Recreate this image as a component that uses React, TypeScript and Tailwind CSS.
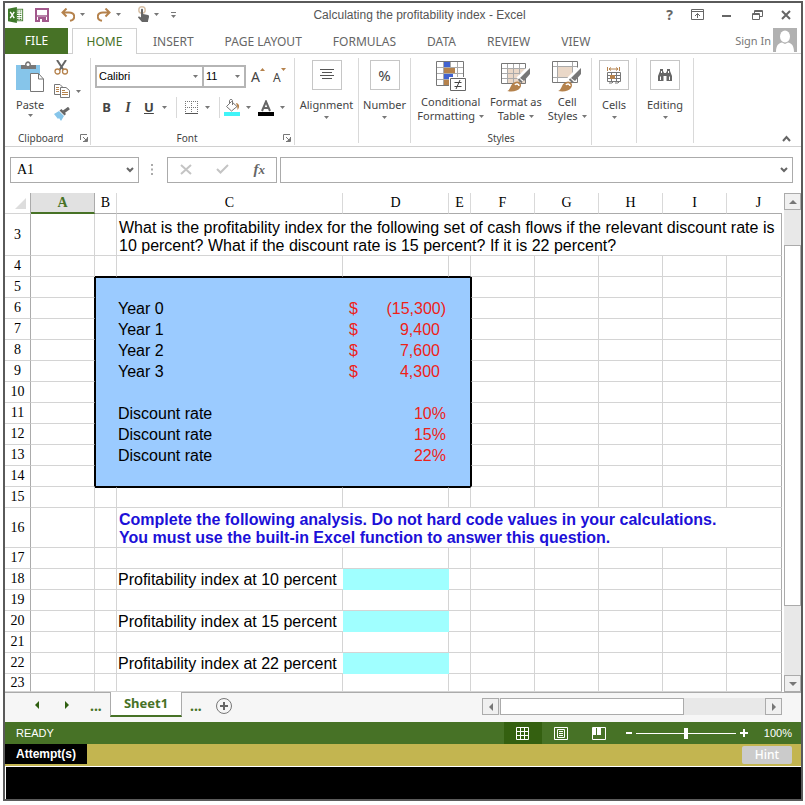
import React, { ReactNode } from "react";

const LABELS = "font-['Noto_Sans',sans-serif]";
const ARIAL = "font-['Liberation_Sans',Arial,sans-serif]";
const SERIF = "font-['Liberation_Serif','Times_New_Roman',serif]";

function Caret({ className = "" }: { className?: string }) {
  return (
    <svg className={"shrink-0 " + className} width="5" height="3" viewBox="0 0 5 3" aria-hidden="true">
      <path d="M0 0H5L2.500 3Z" fill="#777" />
    </svg>
  );
}

/* ---------- Quick access icons ---------- */

function ExcelLogo() {
  return (
    <svg width="16" height="16" viewBox="0 0 18 18" aria-hidden="true">
      <rect x="8.5" y="2.5" width="8" height="13" fill="#fff" stroke="#3f7a2b" />
      <path d="M10 4.500h2M13 4.500h2M10 7h2M13 7h2M10 9.500h2M13 9.500h2M10 12h2M13 12h2M10 14h2M13 14h2" stroke="#3f7a2b" strokeWidth="1.2" />
      <path d="M0 2L10 0V18L0 16Z" fill="#3f7a2b" />
      <path d="M2.500 5.500L7 12.500M7 5.500L2.500 12.500" stroke="#fff" strokeWidth="1.6" />
    </svg>
  );
}

function SaveIcon() {
  return (
    <svg width="14" height="14" viewBox="0 0 14 14" aria-hidden="true">
      <path d="M1 1H13V13H1Z" fill="#fff" stroke="#a2588c" strokeWidth="2" />
      <path d="M2 8H12" stroke="#a2588c" strokeWidth="1.5" />
      <path d="M3 9H11V14H3Z" fill="#a2588c" />
      <path d="M5 11H7V14H5Z" fill="#fff" />
    </svg>
  );
}

function UndoIcon({ flip = false }: { flip?: boolean }) {
  return (
    <svg width="14" height="14" viewBox="0 0 14 14" aria-hidden="true" className={flip ? "-scale-x-100" : ""}>
      <path d="M5.500 .5L1.500 4.500L5.500 8.500M1.500 4.500H8C14.500 4.500 15 11.500 9 12.800" fill="none" stroke="#b5824c" strokeWidth="2" />
    </svg>
  );
}

function TouchIcon() {
  return (
    <svg width="13" height="17" viewBox="0 0 13 17" aria-hidden="true">
      <circle cx="5" cy="4" r="3.2" fill="none" stroke="#d9c3aa" strokeWidth="1.5" />
      <path d="M4 3.500C4 2.500 6 2.500 6 3.500V8L11 9C12 9.300 12 10 12 11L11 15V16H5L1 11.500C1 10 2.500 10 4 11.500Z" fill="#666" />
    </svg>
  );
}

/* ---------- Ribbon icons ---------- */

function PasteIcon() {
  return (
    <svg width="28" height="31" viewBox="0 0 28 31" aria-hidden="true">
      <rect x="0" y="4" width="24" height="25" fill="#86c5ea" />
      <path d="M5 8V4H9C9 -1 15 -1 15 4H20V8Z" fill="#777" />
      <circle cx="12" cy="3.5" r="1.5" fill="#fff" />
      <path d="M14.500 12.500H22.500L27.500 18V30.500H14.500Z" fill="#fff" stroke="#777" />
      <path d="M22.500 12.500V18H27.500" fill="none" stroke="#777" />
    </svg>
  );
}

function CutIcon() {
  return (
    <svg width="15" height="15" viewBox="0 0 15 15" aria-hidden="true">
      <path d="M3 0L9.500 10M12 0L5.500 10" stroke="#666" strokeWidth="2" />
      <circle cx="3.5" cy="11.5" r="2.5" fill="#fff" stroke="#b5824c" strokeWidth="1.3" />
      <circle cx="11" cy="11.5" r="2.5" fill="#fff" stroke="#b5824c" strokeWidth="1.3" />
    </svg>
  );
}

function CopyIcon() {
  return (
    <svg width="16" height="14" viewBox="0 0 16 14" aria-hidden="true">
      <path d="M.5 .5H6L8.500 3V10.500H.5Z" fill="#fff" stroke="#777" />
      <path d="M2 3.500H5M2 5.500H5M2 7.500H5" stroke="#b5824c" />
      <path d="M6.500 3.500H12L15.500 6.500V13.500H6.500Z" fill="#fff" stroke="#777" />
      <path d="M8 6.500H11M8 8.500H14M8 10.500H14" stroke="#b5824c" />
    </svg>
  );
}

function PainterIcon() {
  return (
    <svg width="16" height="14" viewBox="0 0 16 14" aria-hidden="true">
      <path d="M0 7L5 4L10 9L7 14L5 11L4 12Z" fill="#86c5ea" />
      <path d="M5.500 3.500L7.500 2L12 7L10.500 8.500Z" fill="#666" />
      <path d="M9.500 5L15 1" stroke="#666" strokeWidth="3" />
    </svg>
  );
}

function LauncherIcon() {
  return (
    <svg width="8" height="8" viewBox="0 0 8 8" aria-hidden="true">
      <path d="M.5 6V.5H7M3 3L6 6M7.500 3V7.500H3" fill="none" stroke="#777" />
      <path d="M7 4V7H4Z" fill="#777" />
    </svg>
  );
}

function BordersIcon() {
  return (
    <svg width="14" height="14" viewBox="0 0 14 14" aria-hidden="true">
      <path d="M.5 0V12M6.500 0V12M12.500 0V12M0 .5H13M0 6.500H13" stroke="#777" strokeDasharray="1 1" />
      <path d="M0 12.500H13" stroke="#555" />
    </svg>
  );
}

function FillIcon() {
  return (
    <svg width="16" height="17" viewBox="0 0 16 17" aria-hidden="true">
      <path d="M7.500 2.500L13 7.500L7.500 12L2.500 7.500Z" fill="#fff" stroke="#777" />
      <path d="M5.500 5V1.500C6 0 8 0 8.500 1.500V6" fill="none" stroke="#777" />
      <path d="M12 4C15.500 4.500 16 8 13.500 11C13.500 8 13 6.500 12 4Z" fill="#b5824c" />
      <rect y="13" width="16" height="4" fill="#40f4f8" />
    </svg>
  );
}

function FontColorIcon() {
  return (
    <svg width="16" height="16" viewBox="0 0 16 16" aria-hidden="true">
      <path d="M4 11L8 1.500L12 11M5.500 8H10.500" fill="none" stroke="#666" strokeWidth="2" />
      <rect y="12" width="16" height="4" fill="#000" />
    </svg>
  );
}

function ConditionalIcon() {
  return (
    <svg width="30" height="30" viewBox="0 0 30 30" aria-hidden="true">
      <path d="M.5 .5H27.500V24.500H.5Z" fill="#fff" stroke="#777" />
      <path d="M7.500 1V24M14.500 1V24M21.500 1V24M1 6.500H27M1 12.500H27M1 18.500H27" stroke="#aaa" />
      <path d="M8 1H14V6H8ZM8 13H17V18H8Z" fill="#4263d0" />
      <path d="M8 7H19V12H8ZM8 19H13V24H8Z" fill="#b5824c" />
      <path d="M13 16H30V30H13Z" fill="#fff" />
      <path d="M14.500 17.500H29.500V29.500H14.500Z" fill="#fff" stroke="#666" />
      <path d="M18.500 21.500H25.500M18.500 25.500H25.500M24 19L20 28" stroke="#444" />
    </svg>
  );
}

function Brush() {
  return (
    <>
      <path d="M29 8L18 19" stroke="#fff" strokeWidth="7" />
      <path d="M29 7V13L23 20L19 17Z" fill="#777" />
      <path d="M17.500 18L21 21.500" stroke="#777" strokeWidth="2" />
      <path d="M6 30C10 29 9 23 14 21C18 19 22 23 19 27C17 30 12 31 6 30Z" fill="#b5824c" />
      <path d="M14 24C15 22 18 23 18 25" stroke="#fff" strokeWidth="1.5" fill="none" />
    </>
  );
}

function FormatTableIcon() {
  return (
    <svg width="30" height="31" viewBox="0 0 30 31" aria-hidden="true">
      <path d="M.5 2.500H24.500V22.500H.5Z" fill="#fff" stroke="#777" />
      <path d="M7 8H24V22H7Z" fill="#ead8c8" />
      <path d="M6.500 3V22M12.500 3V22M18.500 3V22M1 7.500H24M1 12.500H24M1 17.500H24" stroke="#aaa" />
      <Brush />
    </svg>
  );
}

function CellStylesIcon() {
  return (
    <svg width="30" height="31" viewBox="0 0 30 31" aria-hidden="true">
      <path d="M.5 .5H25.500V21.500H.5Z" fill="#fff" stroke="#777" />
      <path d="M5.500 1V21M20.500 1V21M1 5.500H25M1 16.500H25" stroke="#aaa" />
      <path d="M6 6H20V16H6Z" fill="#ead8c8" />
      <Brush />
    </svg>
  );
}

function AlignIcon() {
  return (
    <svg width="14" height="12" viewBox="0 0 14 12" aria-hidden="true">
      <path d="M0 .5H14M2 3.500H12M0 6.500H14M2 9.500H12" stroke="#555" />
    </svg>
  );
}

function CellsIcon() {
  return (
    <svg width="16" height="17" viewBox="0 0 16 17" aria-hidden="true">
      <path d="M1.500 0V4M13.500 0V4M3 2H12M5 .5L3 2L5 3.500M10 .5L12 2L10 3.500" fill="none" stroke="#b5824c" />
      <path d="M1.500 5.500H14.500V14.500H1.500ZM5.500 6V14M10.500 6V14M1 8.500H15M1 11.500H15" fill="none" stroke="#777" />
      <path d="M4 8H9V12H4Z" fill="#b5824c" />
      <path d="M3 16H6L7 15M9 16H12L13 15" fill="none" stroke="#777" />
    </svg>
  );
}

function BinocularsIcon() {
  return (
    <svg width="16" height="14" viewBox="0 0 16 14" aria-hidden="true">
      <path d="M3 1H6V3L7 5H9L10 3V1H13V3L15 8V13H9.500V8H6.500V13H1V8L3 3Z" fill="#666" />
      <path d="M3.500 8.500V12M12.500 8.500V12M4.500 3V5M11.500 3V5" stroke="#fff" />
    </svg>
  );
}

/* ---------- Ribbon pieces ---------- */

function BoxedGroup({ icon, label, width }: { icon: ReactNode; label: string; width: string }) {
  return (
    <div className={"mb-[3px] mt-1 flex shrink-0 flex-col items-center border-r border-[#d9d9d9] pt-[2px] " + width}>
      <button type="button" className="flex flex-col items-center">
        <span className="flex size-[30px] items-center justify-center border border-[#c6c6c6]">{icon}</span>
        <span className="mt-[6px] leading-[18px]">{label}</span>
        <Caret className="mt-[2px]" />
      </button>
    </div>
  );
}

function StyleButton({ icon, lines }: { icon: ReactNode; lines: [string, string] }) {
  return (
    <button type="button" className="flex flex-col items-center whitespace-nowrap leading-[14px]">
      <span className="flex h-[34px] items-start justify-center">{icon}</span>
      <span>{lines[0]}</span>
      <span className="flex items-center gap-1">
        {lines[1]}
        <Caret />
      </span>
    </button>
  );
}

function TitleBar() {
  return (
    <header className="flex h-[25px] items-center pb-[2px] pl-[3px] pr-[10px]">
      <div className="flex flex-1 items-center">
        <ExcelLogo />
        <button type="button" aria-label="Save" className="ml-[11px]"><SaveIcon /></button>
        <button type="button" aria-label="Undo" className="ml-3 flex items-center gap-[5px]"><UndoIcon /><Caret /></button>
        <button type="button" aria-label="Redo" className="ml-3 flex items-center gap-[5px]"><UndoIcon flip /><Caret /></button>
        <button type="button" aria-label="Touch mode" className="ml-4 flex items-center gap-1"><TouchIcon /><Caret /></button>
        <button type="button" aria-label="Customize toolbar" className="ml-3 flex flex-col items-center gap-[2px]">
          <span className="h-px w-[5px] bg-[#777]" />
          <Caret />
        </button>
      </div>
      <h1 className={"pl-10 text-[12px] text-[#555] " + ARIAL}>Calculating the profitability index - Excel</h1>
      <div className="flex flex-1 items-center justify-end text-[#666]">
        <button type="button" aria-label="Help" className="text-[14px] font-bold">?</button>
        <button type="button" aria-label="Ribbon display options" className="ml-[18px]">
          <svg width="13" height="11" viewBox="0 0 13 11"><path d="M.5 .5H12.500V10.500H.5ZM0 2.500H13M6.500 9V4.500M4 7L6.500 4.500L9 7" fill="none" stroke="#666" /></svg>
        </button>
        <button type="button" aria-label="Minimize" className="ml-[18px]">
          <svg width="10" height="10" viewBox="0 0 10 10"><path d="M0 6H9" stroke="#666" strokeWidth="2" /></svg>
        </button>
        <button type="button" aria-label="Restore" className="ml-5">
          <svg width="11" height="10" viewBox="0 0 11 10"><path d="M2.500 3V.5H10.500V6.500H8M.5 3.500H7.500V9.500H.5ZM0 4.500H8M2 1.500H11" fill="none" stroke="#666" /></svg>
        </button>
        <button type="button" aria-label="Close" className="ml-[18px]">
          <svg width="10" height="10" viewBox="0 0 10 10"><path d="M1 1L9 9M9 1L1 9" stroke="#666" strokeWidth="2" /></svg>
        </button>
      </div>
    </header>
  );
}

const TABS = ["INSERT", "PAGE LAYOUT", "FORMULAS", "DATA", "REVIEW", "VIEW"];

function TabBar() {
  return (
    <nav className="flex h-[26px] text-[12px] text-[#666]">
      <button type="button" className="w-[63px] bg-[#477226] text-white">FILE</button>
      <span className="w-1 border-b border-[#d0d0d0]" />
      <button type="button" className="w-[65px] border border-b-0 border-[#d0d0d0] text-[#477226]">HOME</button>
      <div className="flex flex-1 items-center gap-[31px] border-b border-[#d0d0d0] pl-4 pt-[2px]">
        {TABS.map((t) => (
          <button type="button" key={t} className="whitespace-nowrap">{t}</button>
        ))}
      </div>
      <div className="flex border-b border-[#d0d0d0] pr-[4px]">
        <a href="#signin" className="pt-1 pr-[2px] text-[11px] leading-[18px] text-[#777]">Sign In</a>
        <svg width="24" height="24" viewBox="0 0 24 24" aria-hidden="true">
          <path d="M0 0H24V24H0Z" fill="#b1b1b1" />
          <path d="M3 24C3 17 6 15 9 14.500L12 16L15 14.500C18 15 21 17 21 24Z" fill="#fff" />
          <ellipse cx="12" cy="8.5" rx="5" ry="6" fill="#fff" />
        </svg>
      </div>
    </nav>
  );
}

function Ribbon() {
  return (
    <section className="flex h-[93px] border-b border-[#d0d0d0] text-[11px] text-[#444]">
      <div className="mb-px mt-1 flex w-[86px] shrink-0 flex-col border-r border-[#d9d9d9]">
        <div className="flex flex-1 pl-[11px]">
          <button type="button" className="flex flex-col items-center pt-[3px]">
            <PasteIcon />
            <span className="mt-[5px] leading-[16px]">Paste</span>
            <Caret className="mt-px" />
          </button>
          <div className="flex flex-col items-start gap-[9px] pl-[10px] pt-[2px]">
            <button type="button" aria-label="Cut"><CutIcon /></button>
            <button type="button" aria-label="Copy" className="flex items-center gap-[6px]"><CopyIcon /><Caret /></button>
            <button type="button" aria-label="Format painter"><PainterIcon /></button>
          </div>
        </div>
        <div className="flex items-center justify-between pl-[13px] pr-[2px] text-[10px] leading-[14px]">
          Clipboard
          <button type="button" aria-label="Clipboard options"><LauncherIcon /></button>
        </div>
      </div>

      <div className="mb-px mt-1 flex w-[204px] shrink-0 flex-col border-r border-[#d9d9d9] pl-1">
        <div className="flex pt-[7px]">
          <label className={"flex h-[23px] w-[109px] items-center border-2 border-[#b5b5b5] pb-px pl-[2px] pr-1 text-black " + ARIAL}>
            <select aria-label="Font" className="w-full appearance-none text-[11px] outline-none"><option>Calibri</option></select>
            <Caret />
          </label>
          <label className={"-ml-[2px] flex h-[23px] w-[44px] items-center border-2 border-[#b5b5b5] pb-px pl-[2px] pr-1 text-black " + ARIAL}>
            <select aria-label="Font size" className="w-full appearance-none text-[11px] outline-none"><option>11</option></select>
            <Caret />
          </label>
          <button type="button" aria-label="Increase font size" className="ml-[5px] flex items-start pt-[3px]">
            <span className="text-[14px] leading-[18px]">A</span>
            <svg width="5" height="3" viewBox="0 0 5 3"><path d="M0 3H5L2.500 0Z" fill="#b5824c" /></svg>
          </button>
          <button type="button" aria-label="Decrease font size" className="ml-2 flex items-start pt-[3px]">
            <span className="text-[12px] leading-[20px]">A</span>
            <svg width="5" height="3" viewBox="0 0 5 3"><path d="M0 0H5L2.500 3Z" fill="#b5824c" /></svg>
          </button>
        </div>
        <div className="flex flex-1 items-center pb-1 pl-[7px]">
          <button type="button" className="w-[9px] text-[13px] font-bold">B</button>
          <button type="button" className={"ml-[13px] w-2 text-[14px] font-bold italic " + SERIF}>I</button>
          <button type="button" className="ml-[12px] flex items-center gap-2 text-[13px]"><span className="font-bold underline">U</span><Caret /></button>
          <span className="ml-[9px] h-[21px] w-px bg-[#d9d9d9]" />
          <button type="button" aria-label="Borders" className="ml-2 flex items-center gap-[6px]"><BordersIcon /><Caret /></button>
          <span className="ml-[9px] h-[21px] w-px bg-[#d9d9d9]" />
          <button type="button" aria-label="Fill color" className="ml-1 flex items-center gap-[6px]"><FillIcon /><Caret /></button>
          <button type="button" aria-label="Font color" className="ml-[7px] flex items-center gap-[6px]"><FontColorIcon /><Caret /></button>
        </div>
        <div className="flex items-center justify-between pr-[3px] text-[10px] leading-[14px]">
          <span className="w-2" />
          <span className="pr-3">Font</span>
          <button type="button" aria-label="Font options"><LauncherIcon /></button>
        </div>
      </div>

      <BoxedGroup width="w-[64px]" label="Alignment" icon={<AlignIcon />} />
      <BoxedGroup width="w-[52px]" label="Number" icon={<span className="text-[15px]">%</span>} />

      <div className="mb-px mt-1 flex w-[181px] shrink-0 flex-col items-center border-r border-[#d9d9d9] pt-[3px]">
        <div className="flex flex-1 gap-[6px] pl-[2px]">
          <StyleButton icon={<ConditionalIcon />} lines={["Conditional", "Formatting"]} />
          <StyleButton icon={<FormatTableIcon />} lines={["Format as", "Table"]} />
          <StyleButton icon={<CellStylesIcon />} lines={["Cell", "Styles"]} />
        </div>
        <span className="text-[10px] leading-[14px]">Styles</span>
      </div>

      <BoxedGroup width="w-[45px]" label="Cells" icon={<CellsIcon />} />
      <BoxedGroup width="w-[57px]" label="Editing" icon={<BinocularsIcon />} />
      <button type="button" aria-label="Collapse ribbon" className="mb-1 ml-auto mr-[10px] self-end">
        <svg width="9" height="7" viewBox="0 0 9 7"><path d="M1 6L4.500 2L8 6" fill="none" stroke="#666" strokeWidth="2" /></svg>
      </button>
    </section>
  );
}

function FormulaBar() {
  const chevron = (
    <svg width="8" height="6" viewBox="0 0 8 6" className="shrink-0" aria-hidden="true">
      <path d="M1 1L4 4L7 1" fill="none" stroke="#666" strokeWidth="2" />
    </svg>
  );
  return (
    <section className="flex h-[46px] items-start pl-[5px] pr-2 pt-[10px]">
      <label className="flex h-[26px] w-[129px] items-center border border-[#ababab] pl-[6px] pr-1">
        <input aria-label="Name box" defaultValue="A1" className={"w-full min-w-0 pb-[2px] text-[14px] outline-none " + SERIF} />
        {chevron}
      </label>
      <svg width="2" height="11" viewBox="0 0 2 11" className="ml-3 mt-[7px]" aria-hidden="true">
        <path d="M0 0H2V2H0ZM0 4.500H2V6.500H0ZM0 9H2V11H0Z" fill="#aaa" />
      </svg>
      <div className="ml-[14px] flex h-[26px] w-[110px] items-center justify-between border border-[#ababab] pb-[2px] pl-3 pr-[11px]">
        <button type="button" aria-label="Cancel">
          <svg width="12" height="11" viewBox="0 0 12 11"><path d="M1 1L11 10M11 1L1 10" stroke="#c4c4c4" strokeWidth="2" /></svg>
        </button>
        <button type="button" aria-label="Enter">
          <svg width="13" height="10" viewBox="0 0 13 10"><path d="M1 5L4.500 8.500L12 1" fill="none" stroke="#c4c4c4" strokeWidth="2" /></svg>
        </button>
        <button type="button" aria-label="Insert function" className={"text-[15px] font-bold italic leading-[16px] text-[#666] " + SERIF}>
          f<span className="text-[13px]">x</span>
        </button>
      </div>
      <label className="ml-[3px] flex h-[26px] flex-1 items-center border border-[#ababab] pl-1 pr-[4px]">
        <input aria-label="Formula" className="w-full min-w-0 outline-none" />
        {chevron}
      </label>
    </section>
  );
}

/* ---------- Sheet ---------- */

const GRID = "border-r border-b border-[#d4d4d4] p-0 ";
const PLAIN_COLUMNS = ["F", "G", "H", "I", "J"];

const INPUTS: Record<number, { label: string; value: string; money?: boolean; negative?: boolean }> = {
  6: { label: "Year 0", value: "(15,300)", money: true, negative: true },
  7: { label: "Year 1", value: "9,400", money: true },
  8: { label: "Year 2", value: "7,600", money: true },
  9: { label: "Year 3", value: "4,300", money: true },
  11: { label: "Discount rate", value: "10%" },
  12: { label: "Discount rate", value: "15%" },
  13: { label: "Discount rate", value: "22%" },
};

const ANSWERS: Record<number, string> = {
  18: "Profitability index at 10 percent",
  20: "Profitability index at 15 percent",
  22: "Profitability index at 22 percent",
};

function RowNumber({ n }: { n: number }) {
  return (
    <th scope="row" className={"border-r border-b border-b-[#d4d4d4] border-r-[#ababab] p-0 text-[14px] font-normal leading-[16px] " + SERIF}>
      {n}
    </th>
  );
}

function Plain({ boxed = false }: { boxed?: boolean }) {
  return (
    <>
      {PLAIN_COLUMNS.map((c) => (
        <td
          key={c}
          className={
            "border-r border-b border-b-[#d4d4d4] p-0 " +
            (c === "J" ? "border-r-[#ababab] " : "border-r-[#d4d4d4] ") +
            (boxed && c === "F" ? "border-l border-l-black" : "")
          }
        />
      ))}
    </>
  );
}

function BoxRow({ n }: { n: number }) {
  const item = INPUTS[n];
  const edge = n === 5 ? "border-t border-t-black " : n === 14 ? "border-b border-b-black " : "";
  const fill = "bg-[#9bcbff] p-0 " + edge;
  return (
    <tr className="h-[21px]">
      <RowNumber n={n} />
      <td className="border-r border-b border-b-[#d4d4d4] border-r-black p-0" />
      <td className={fill + "border-l border-l-black"} />
      <td className={fill + "pl-px"}>{item?.label}</td>
      <td className={fill + "text-[#ee2218]"}>
        {item && (
          <div className={"flex pl-[6px] " + (item.money && !item.negative ? "pr-[9px]" : "pr-[3px]")}>
            {item.money && <span>$</span>}
            <span className="ml-auto">{item.value}</span>
          </div>
        )}
      </td>
      <td className={fill + "border-r border-r-black"} />
      <Plain boxed />
    </tr>
  );
}

function GridRow({ n }: { n: number }) {
  const label = ANSWERS[n];
  const inner =
    n === 4 ? "border-r border-b border-r-[#d4d4d4] border-b-black p-0 "
    : n === 15 ? "border-t border-r border-b border-r-[#d4d4d4] border-b-[#d4d4d4] border-t-black p-0 "
    : GRID;
  return (
    <tr className={n === 23 ? "h-[18px]" : "h-[21px]"}>
      <RowNumber n={n} />
      <td className={GRID} />
      <td className={inner} />
      {label ? (
        <>
          <td className="whitespace-nowrap border-b border-[#d4d4d4] p-0 pl-px pt-[2px]">{label}</td>
          <td className="border-b border-[#a0ffff] bg-[#a0ffff] p-0" />
          <td className="border-r border-b border-[#d4d4d4] p-0" />
        </>
      ) : (
        <>
          <td className={inner} />
          <td className={inner} />
          <td className={inner} />
        </>
      )}
      <Plain />
    </tr>
  );
}

function TextRow({ n, height, children }: { n: number; height: string; children: ReactNode }) {
  return (
    <tr className={height}>
      <RowNumber n={n} />
      <td className={GRID} />
      <td className={GRID} />
      <td colSpan={8} className="border-r border-b border-b-[#d4d4d4] border-r-[#ababab] p-0 pl-[2px] align-bottom">
        {children}
      </td>
    </tr>
  );
}

function Sheet() {
  const head = "border-r border-b border-r-[#d9d9d9] border-b-[#ababab] p-0 ";
  return (
    <table className={"min-w-0 flex-1 table-fixed border-separate border-spacing-0 text-[16px] leading-[18px] text-black " + ARIAL}>
      <colgroup>
        <col className="w-[26px]" />
        <col className="w-[64px]" />
        <col className="w-[22px]" />
        <col className="w-[226px]" />
        <col className="w-[106px]" />
        <col className="w-[22px]" />
        <col className="w-[64px]" />
        <col className="w-[64px]" />
        <col className="w-[64px]" />
        <col className="w-[64px]" />
        <col />
      </colgroup>
      <thead>
        <tr className={"h-[21px] text-[14px] leading-[16px] " + SERIF}>
          <td className="border-r border-b border-b-[#d4d4d4] border-r-[#ababab] p-0">
            <svg width="11" height="11" viewBox="0 0 11 11" className="ml-auto mr-1" aria-hidden="true"><path d="M11 0V11H0Z" fill="#ddd" /></svg>
          </td>
          <th scope="col" className="border-r border-b-2 border-r-[#ababab] border-b-[#477226] bg-[#e1e1e1] p-0 text-[#477226]">A</th>
          {["B", "C", "D", "E", "F", "G", "H", "I"].map((c) => (
            <th scope="col" key={c} className={head + "font-normal"}>{c}</th>
          ))}
          <th scope="col" className="border-b border-[#ababab] p-0 pl-2 font-normal">J</th>
        </tr>
      </thead>
      <tbody>
        <TextRow n={3} height="h-[42px]">
          What is the profitability index for the following set of cash flows if the relevant discount rate is
          <br />
          10 percent? What if the discount rate is 15 percent? If it is 22 percent?
        </TextRow>
        <GridRow n={4} />
        {[5, 6, 7, 8, 9, 10, 11, 12, 13, 14].map((n) => <BoxRow key={n} n={n} />)}
        <GridRow n={15} />
        <TextRow n={16} height="h-[40px]">
          <strong className="text-[#1c10d8]">
            Complete the following analysis. Do not hard code values in your calculations.
            <br />
            You must use the built-in Excel function to answer this question.
          </strong>
        </TextRow>
        {[17, 18, 19, 20, 21, 22, 23].map((n) => <GridRow key={n} n={n} />)}
      </tbody>
    </table>
  );
}

function Arrow({ dir }: { dir: "up" | "down" | "left" | "right" }) {
  const d = {
    up: "M0 6H8L4 2Z",
    down: "M0 2H8L4 6Z",
    left: "M6 0V8L2 4Z",
    right: "M2 0V8L6 4Z",
  }[dir];
  return (
    <svg width="8" height="8" viewBox="0 0 8 8" aria-hidden="true"><path d={d} fill="#777" /></svg>
  );
}

const SCROLL_BUTTON = "flex size-[17px] shrink-0 items-center justify-center border border-[#ababab] bg-[#f0f0f0]";

function VerticalScroll() {
  return (
    <div className="ml-[2px] flex w-[17px] shrink-0 flex-col bg-[#e8e8e8]">
      <button type="button" aria-label="Scroll up" className={SCROLL_BUTTON}><Arrow dir="up" /></button>
      <div className="flex flex-1 flex-col">
        <div className="basis-[35px]" />
        <div className="basis-[361px] border border-[#ababab] bg-white" />
      </div>
      <button type="button" aria-label="Scroll down" className={SCROLL_BUTTON}><Arrow dir="down" /></button>
    </div>
  );
}

function SheetTabs() {
  return (
    <div className="flex h-[30px] items-start border-t border-[#ababab] bg-[#f6f6f6] pl-[29px] text-[#477226]">
      <button type="button" aria-label="Previous sheet" className="mt-2">
        <svg width="8" height="8" viewBox="0 0 8 8"><path d="M5 0V8L1 4Z" fill="#2f5f10" /></svg>
      </button>
      <button type="button" aria-label="Next sheet" className="ml-[21px] mt-2">
        <svg width="8" height="8" viewBox="0 0 8 8"><path d="M2 0V8L6 4Z" fill="#2f5f10" /></svg>
      </button>
      <button type="button" className="ml-[19px] mt-[2px] w-5 text-left text-[14px] font-bold">...</button>
      <button type="button" className="-mt-px h-[25px] w-[72px] border-x border-b-2 border-x-[#ababab] border-b-[#477226] bg-white text-[13px] font-bold">Sheet1</button>
      <button type="button" className="ml-2 mt-[2px] w-5 text-left text-[14px] font-bold">...</button>
      <button type="button" aria-label="New sheet" className="ml-[6px] mt-[5px]">
        <svg width="16" height="16" viewBox="0 0 16 16">
          <circle cx="8" cy="8" r="7.5" fill="none" stroke="#777" />
          <path d="M8 4V12M4 8H12" stroke="#666" strokeWidth="2" />
        </svg>
      </button>
      <div className="ml-auto mr-[19px] mt-[5px] flex w-[300px] bg-[#e8e8e8]">
        <button type="button" aria-label="Scroll left" className={SCROLL_BUTTON}><Arrow dir="left" /></button>
        <div className="ml-px w-[184px] border border-[#ababab] bg-white" />
        <button type="button" aria-label="Scroll right" className={"ml-auto " + SCROLL_BUTTON}><Arrow dir="right" /></button>
      </div>
    </div>
  );
}

function StatusBar() {
  return (
    <footer className={"flex h-[22px] items-center bg-[#477226] pl-[11px] pr-[9px] text-[11px] text-white " + ARIAL}>
      <span>READY</span>
      <button type="button" aria-label="Normal view" className="ml-auto flex h-full w-[38px] items-center justify-center bg-[#346010]">
        <svg width="13" height="13" viewBox="0 0 13 13"><path d="M.5 .5H12.500V12.500H.5ZM4.500 0V13M8.500 0V13M0 4.500H13M0 8.500H13" fill="none" stroke="#fff" /></svg>
      </button>
      <button type="button" aria-label="Page layout view" className="flex w-[38px] justify-center">
        <svg width="14" height="13" viewBox="0 0 14 13"><path d="M.5 .5H13.500V12.500H.5ZM3.500 2.500H10.500V10.500H3.500ZM5 4.500H9M5 6.500H9M5 8.500H9" fill="none" stroke="#fff" /></svg>
      </button>
      <button type="button" aria-label="Page break view" className="flex w-[38px] justify-center">
        <svg width="14" height="13" viewBox="0 0 14 13"><path d="M.5 .5H13.500V12.500H.5Z" fill="none" stroke="#fff" /><path d="M1 1H4V8H1ZM5 1H9V8H5Z" fill="#fff" /></svg>
      </button>
      <button type="button" aria-label="Zoom out" className="ml-2">
        <svg width="6" height="8" viewBox="0 0 6 8"><path d="M0 4H6" stroke="#fff" strokeWidth="2" /></svg>
      </button>
      <input
        type="range"
        aria-label="Zoom"
        defaultValue={50}
        className="mx-1 h-[12px] w-[100px] appearance-none bg-[linear-gradient(#fff,#fff)] bg-[length:100%_1px] bg-center bg-no-repeat [&::-webkit-slider-thumb]:h-[11px] [&::-webkit-slider-thumb]:w-1 [&::-webkit-slider-thumb]:appearance-none [&::-webkit-slider-thumb]:bg-white"
      />
      <button type="button" aria-label="Zoom in">
        <svg width="8" height="8" viewBox="0 0 8 8"><path d="M0 4H8M4 0V8" stroke="#fff" strokeWidth="2" /></svg>
      </button>
      <span className="ml-4">100%</span>
    </footer>
  );
}

export default function App() {
  return (
    <div className="bg-white pb-1 pl-[3px] pr-[2px] pt-px">
      <main className={"border-2 border-[#5a5a5a] bg-white " + LABELS}>
        <TitleBar />
        <TabBar />
        <Ribbon />
        <FormulaBar />
        <div className="flex">
          <Sheet />
          <VerticalScroll />
        </div>
        <SheetTabs />
        <StatusBar />
        <div className="flex h-[22px] items-start justify-between bg-[#c3b550] pr-[9px]">
          <span className={"flex h-5 w-[82px] items-center justify-center bg-black text-[12px] font-bold text-white " + ARIAL}>Attempt(s)</span>
          <button type="button" className="mt-[2px] h-[18px] w-[50px] rounded-[2px] bg-[#cbcbcb] text-[12px] font-medium leading-[18px] text-white">Hint</button>
        </div>
        <div className="ml-px mt-px h-8 bg-black" />
      </main>
    </div>
  );
}
